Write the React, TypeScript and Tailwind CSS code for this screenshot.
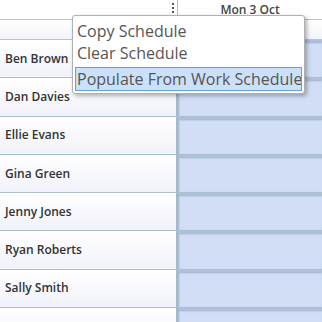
import React from 'react';

const staff = [
  'Ben Brown',
  'Dan Davies',
  'Ellie Evans',
  'Gina Green',
  'Jenny Jones',
  'Ryan Roberts',
  'Sally Smith',
  '',
];

const menuItems = ['Copy Schedule', 'Clear Schedule', 'Populate From Work Schedule'];

const App = () => {
  return (
    <div className="relative w-[322px] h-[322px] overflow-hidden bg-white font-['Open_Sans',sans-serif]">
      {/* header rows */}
      <div className="flex h-[19px]">
        <div className="relative w-[178px] bg-white border-r border-[#9fc3cf]">
          <div className="absolute left-[172px] top-[3px] flex flex-col gap-[2px]">
            <span className="block w-[2px] h-[2px] bg-[#555]" />
            <span className="block w-[2px] h-[2px] bg-[#555]" />
            <span className="block w-[2px] h-[2px] bg-[#555]" />
          </div>
        </div>
        <div className="flex-1 flex items-center justify-center text-[12px] font-[560] text-[#444]">
          Mon 3 Oct
        </div>
      </div>
      <div className="flex h-[21px] border-t border-[#b3c7cd] border-b bg-gradient-to-b from-white to-[#f3f4f9]">
        <div className="w-[178px] border-r border-[#b3c7cd]" />
        <div className="flex-1" />
      </div>

      {/* staff rows */}
      {staff.map((name, i) => (
        <div key={i} className="flex h-[38.3px] border-b border-[#a9c1c8]">
          <div className="w-[178px] flex items-center pl-[5px] bg-gradient-to-b from-white to-[#f1f2fa] border-r-2 border-[#a3bcc4] text-[12px] font-[580] text-[#333]">
            {name}
          </div>
          <div className="flex-1 bg-[#d2def6] border-t-2 border-[#b0bfdb] shadow-[inset_1px_1px_2px_rgba(90,110,150,0.4)]" />
        </div>
      ))}

      {/* context menu */}
      <div className="absolute left-[72px] top-[15px] w-[233px] bg-white border border-[#b0b0b0] rounded-[3px] shadow-[2px_2px_4px_rgba(0,0,0,0.3)] pt-[4px] pb-[2px] px-[2px] text-[16px] text-[#555] leading-[22px] whitespace-nowrap">
        {menuItems.map((item, i) =>
          i === 2 ? (
            <div
              key={item}
              className="mt-[3px] px-[1px] h-[24px] leading-[22px] bg-[#cce0fa] border border-[#5aa0ee] overflow-hidden"
            >
              {item}
            </div>
          ) : (
            <div key={item} className="px-[2px] h-[22px]">
              {item}
            </div>
          )
        )}
      </div>
    </div>
  );
};

export default App;
